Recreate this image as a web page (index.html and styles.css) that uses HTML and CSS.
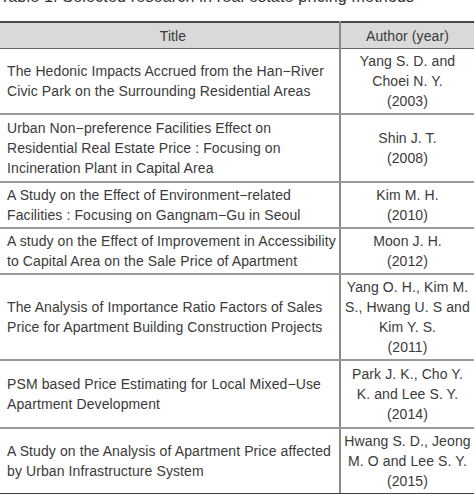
FILE: index.html
```html
<!DOCTYPE html>
<html>
<head>
<meta charset="utf-8">
<link rel="stylesheet" href="styles.css">
</head>
<body>
<div class="caption">Table 1. Selected research in real estate pricing methods</div>
<table class="tbl">
  <thead>
    <tr><th class="c-title">Title</th><th class="c-author">Author (year)</th></tr>
  </thead>
  <tbody>
    <tr><td class="c-title">The Hedonic Impacts Accrued from the Han−River<br>Civic Park on the Surrounding Residential Areas</td><td class="c-author">Yang S. D. and<br>Choei N. Y.<br>(2003)</td></tr>
    <tr class="tall"><td class="c-title">Urban Non−preference Facilities Effect on<br>Residential Real Estate Price : Focusing on<br>Incineration Plant in Capital Area</td><td class="c-author">Shin J. T.<br>(2008)</td></tr>
    <tr><td class="c-title">A Study on the Effect of Environment−related<br>Facilities : Focusing on Gangnam−Gu in Seoul</td><td class="c-author">Kim M. H.<br>(2010)</td></tr>
    <tr><td class="c-title">A study on the Effect of Improvement in Accessibility<br>to Capital Area on the Sale Price of Apartment</td><td class="c-author">Moon J. H.<br>(2012)</td></tr>
    <tr><td class="c-title">The Analysis of Importance Ratio Factors of Sales<br>Price for Apartment Building Construction Projects</td><td class="c-author">Yang O. H., Kim M.<br>S., Hwang U. S and<br>Kim Y. S.<br>(2011)</td></tr>
    <tr class="tall"><td class="c-title">PSM based Price Estimating for Local Mixed−Use<br>Apartment Development</td><td class="c-author">Park J. K., Cho Y.<br>K. and Lee S. Y.<br>(2014)</td></tr>
    <tr class="last"><td class="c-title">A Study on the Analysis of Apartment Price affected<br>by Urban Infrastructure System</td><td class="c-author">Hwang S. D., Jeong<br>M. O and Lee S. Y.<br>(2015)</td></tr>
  </tbody>
</table>
</body>
</html>
```
FILE: styles.css
```css
html, body {
  margin: 0;
  padding: 0;
  background: #ffffff;
}
body {
  font-family: "Liberation Sans", Arial, sans-serif;
  color: #3a3a3a;
  width: 474px;
  overflow: hidden;
}
.caption {
  font-size: 16px;
  line-height: 20px;
  height: 20px;
  margin-top: -13px;
  white-space: nowrap;
  letter-spacing: 0.2px;
  color: #333;
}
.tbl {
  margin-top: 14px;
  width: 474px;
  border-collapse: collapse;
  table-layout: fixed;
  font-size: 14px;
  line-height: 20px;
  letter-spacing: 0.1px;
}
.tbl th, .tbl td {
  box-sizing: border-box;
  padding: 2px 0 2px 0;
  vertical-align: middle;
  font-weight: normal;
  white-space: nowrap;
}
.tbl th {
  background: #d9d9d9;
  border-top: 2px solid #4a4a4a;
  border-bottom: 1px solid #666;
  padding: 3px 0 2px 0;
}
.tbl td {
  border-bottom: 2px solid #9a9a9a;
}
.tbl tr.tall td {
  padding: 3px 0 3px 0;
}
.tbl tr.last td {
  border-bottom: 2px solid #3f3f3f;
}
.c-title {
  width: 340px;
  text-align: left;
  padding-left: 7px !important;
  border-right: 2px solid #8a8a8a;
}
th.c-title {
  text-align: center;
}
.c-author {
  text-align: center;
}
```
